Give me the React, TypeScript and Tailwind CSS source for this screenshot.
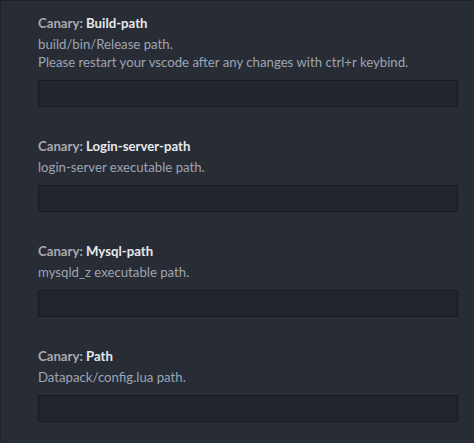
import React from 'react';

interface SettingProps {
  name: string;
  lines: string[];
}

const Setting: React.FC<SettingProps> = ({ name, lines }) => {
  return (
    <div className="pt-[13px] pb-[17px] pl-[37px] pr-[16px]">
      <div className="leading-[18px] font-bold">
        <span className="text-[#a6aab1]">Canary: </span>
        <span className="text-[#e6e8ec]">{name}</span>
      </div>
      <div className="mt-[3px] leading-[18px] text-[#9da5b4]">
        {lines.map((l) => (
          <div key={l}>{l}</div>
        ))}
      </div>
      <div className="mt-[9px] h-[27px] w-full bg-[#22252c] border border-[#181a1f]" />
    </div>
  );
};

export default function App() {
  return (
    <div
      className="w-[474px] h-[443px] overflow-hidden bg-[#282c34] border-t border-l border-[#1e2227] text-[13.2px]"
      style={{ fontFamily: 'Lato, "Noto Sans", sans-serif' }}
    >
      <Setting
        name="Build-path"
        lines={[
          'build/bin/Release path.',
          'Please restart your vscode after any changes with ctrl+r keybind.',
        ]}
      />
      <Setting name="Login-server-path" lines={['login-server executable path.']} />
      <Setting name="Mysql-path" lines={['mysqld_z executable path.']} />
      <Setting name="Path" lines={['Datapack/config.lua path.']} />
    </div>
  );
}
